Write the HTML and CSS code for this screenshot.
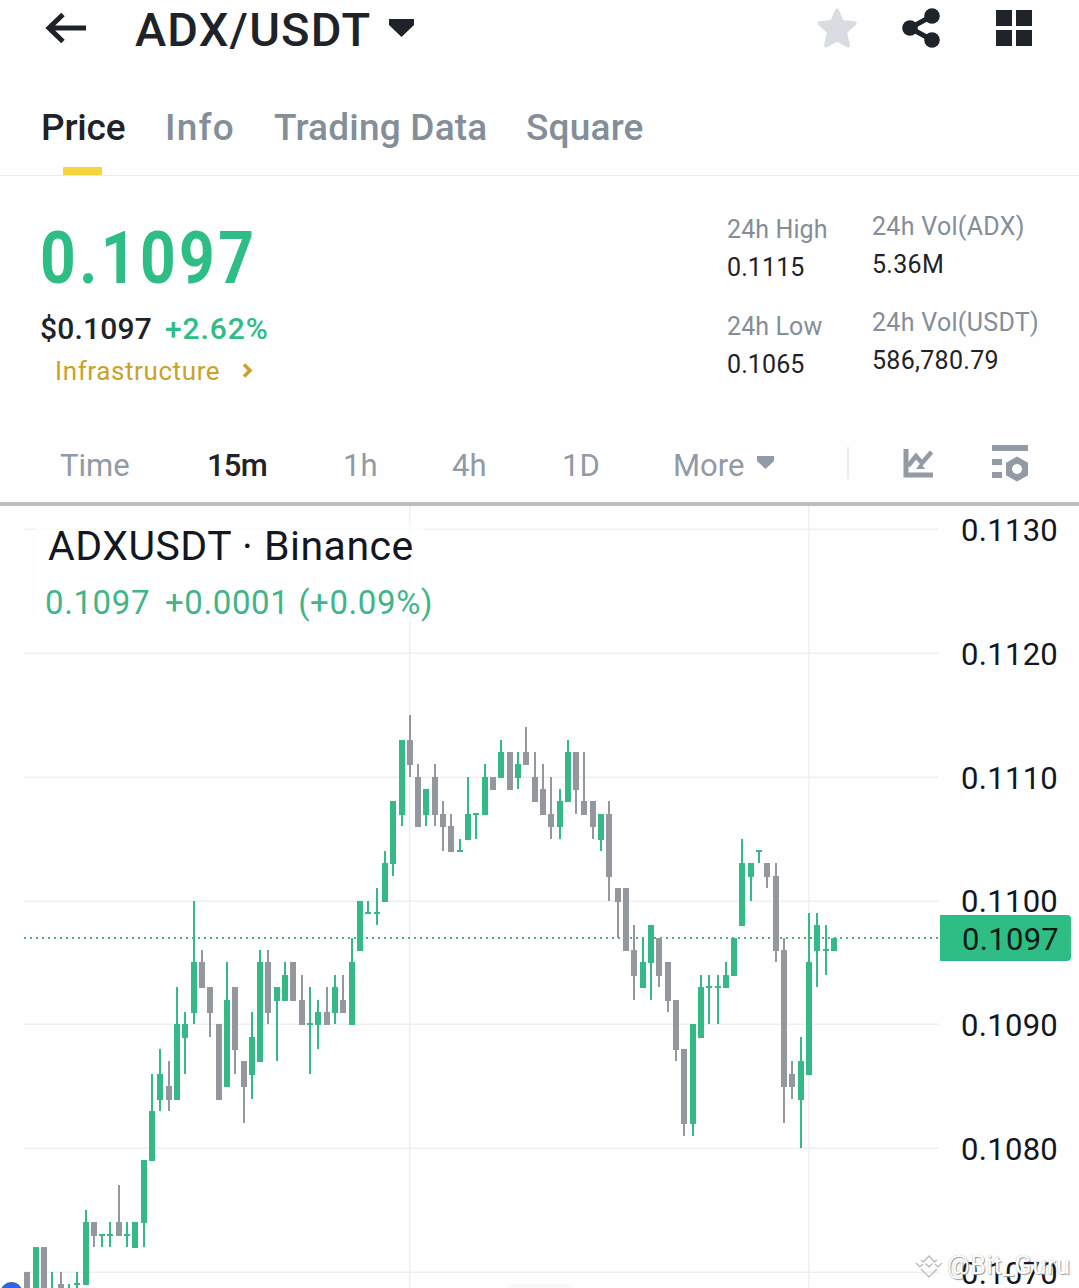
FILE: index.html
```html
<!DOCTYPE html>
<html lang="en">
<head>
    <meta charset="UTF-8">
    <meta name="viewport" content="width=device-width, initial-scale=1.0">
    <title>ADX/USDT</title>
    <link rel="stylesheet" href="styles.css">
</head>
<body>
    <div class="page">
        <header class="header">
            <svg class="back" width="42" height="32" viewBox="0 0 42 32"><path d="M41 16H5M18 2.500L4 16l14 13.500" fill="none" stroke="#1e2329" stroke-width="5"/></svg>
            <h1>ADX/USDT</h1>
            <svg class="caret" width="25" height="18" viewBox="0 0 25 18"><path d="M0 0h25v6L12.500 18 0 6z" fill="#1e2329"/></svg>
            <div class="header-actions">
                <svg width="40" height="40" viewBox="0 0 40 40"><path d="M20 2.500l5 11.500 12.500 1.300-9.500 8.700 3 13.500L20 31.500 9 37.500l3-13.500-9.500-8.700L15 14z" fill="#d9dce1" stroke="#d9dce1" stroke-width="4" stroke-linejoin="round"/></svg>
                <svg width="38" height="40" viewBox="0 0 38 40"><path d="M30 8L8 20l22 12" fill="none" stroke="#1e2329" stroke-width="5"/><g fill="#1e2329"><circle cx="30" cy="8" r="7.800"/><circle cx="8" cy="20" r="7.800"/><circle cx="30" cy="32" r="7.800"/></g></svg>
                <svg width="36" height="36" viewBox="0 0 36 36"><path d="M0 0h16v16H0zM20 0h16v16H20zM0 20h16v16H0zM20 20h16v16H20z" fill="#1e2329"/></svg>
            </div>
        </header>

        <nav class="tabs">
            <a class="tab active">Price</a>
            <a class="tab info">Info</a>
            <a class="tab trading">Trading Data</a>
            <a class="tab square">Square</a>
        </nav>

        <section class="summary">
            <div class="price-block">
                <div class="last-price">0.1097</div>
                <div class="fiat"><span>$0.1097</span><span class="change">+2.62%</span></div>
                <div class="category">
                    <span>Infrastructure</span>
                    <svg width="11" height="15" viewBox="0 0 11 15"><path d="M2 1.500l6 6-6 6" fill="none" stroke="#c9a227" stroke-width="3.500"/></svg>
                </div>
            </div>
            <dl class="stats">
                <dt>24h High</dt><dd>0.1115</dd>
                <dt>24h Low</dt><dd>0.1065</dd>
            </dl>
            <dl class="stats volume">
                <dt>24h Vol(ADX)</dt><dd>5.36M</dd>
                <dt class="usdt">24h Vol(USDT)</dt><dd>586,780.79</dd>
            </dl>
        </section>

        <div class="periods">
            <span>Time</span>
            <span class="active">15m</span>
            <span>1h</span>
            <span>4h</span>
            <span>1D</span>
            <span class="more">More <svg width="17" height="13" viewBox="0 0 17 13"><path d="M0 0h17v5l-8.500 8L0 5z" fill="#929aa5"/></svg></span>
            <i class="divider"></i>
            <svg class="tool" width="30" height="29" viewBox="0 0 30 29"><g fill="none" stroke="#929aa5"><path d="M3 0v26H30" stroke-width="5"/><path d="M5 17l8-10 6 7L28.500 3" stroke-width="4.500"/></g><path d="M17.500 14l4.500 6h-9z" fill="#929aa5"/></svg>
            <svg class="tool" width="37" height="38" viewBox="0 0 37 38"><path fill="#929aa5" fill-rule="evenodd" d="M0 1h36v6H0zM0 15h10v6H0zM0 28h10v6H0zM25 12.500l11 6.300v12.400l-11 6.300-11-6.300V18.800zM25 20a5 5 0 1 0 .01 0z"/></svg>
        </div>

        <main class="chart">
            <svg id="plot" class="plot" width="940" height="782" viewBox="0 506 940 782"></svg>
            <div class="axis" id="axis"></div>
            <div class="legend">
                <div class="legend-name">ADXUSDT · Binance</div>
                <div class="legend-values"><span>0.1097</span><span>+0.0001 (+0.09%)</span></div>
            </div>
            <div class="price-tag">0.1097</div>
            <div class="badge"></div>
            <div class="handle"></div>
            <div class="watermark">
                <svg width="28" height="24" viewBox="0 0 28 24"><path d="M6 6l2.500 2L14 2l5.500 6L22 6M1 9l4 4 3-3M20 10l3 3 4-4M10.500 9.500L14 13l3.500-3.500M6 15l8 8 8-8" fill="none" stroke="#b4b6b9" stroke-width="1.200"/></svg>
                <span>@Bit_Guru</span>
            </div>
        </main>
    </div>

    <script>
        // [color, high, bodyTop, bodyBottom, low], prices in units of 0.0001
        const candles = [
            ['d',1070,1070,1066,1066], ['u',1072,1072,1066,1066], ['d',1072,1072,1066,1066], ['u',1070,1067,1066,1066],
            ['d',1070,1069,1066,1066], ['u',1069,1067,1066,1066], ['u',1070,1069,1069,1066], ['u',1075,1074,1069,1069],
            ['d',1074,1074,1073,1072], ['u',1073,1073,1073,1072], ['u',1074,1073,1073,1072], ['d',1077,1074,1073,1073],
            ['u',1074,1073,1073,1072], ['u',1074,1074,1072,1072], ['u',1079,1079,1074,1072], ['u',1086,1083,1079,1079],
            ['u',1088,1086,1084,1083], ['d',1087,1085,1084,1083], ['u',1093,1090,1084,1084], ['u',1091,1090,1089,1086],
            ['u',1100,1095,1091,1090], ['d',1096,1095,1093,1093], ['d',1093,1093,1091,1089], ['d',1090,1090,1084,1084],
            ['u',1095,1092,1085,1085], ['d',1093,1093,1088,1086], ['d',1087,1087,1085,1082], ['u',1091,1089,1086,1084],
            ['u',1096,1095,1087,1087], ['d',1096,1095,1091,1090], ['u',1093,1093,1092,1087], ['u',1095,1094,1092,1092],
            ['d',1095,1095,1092,1092], ['d',1094,1092,1090,1090], ['u',1093,1090,1090,1086], ['u',1092,1091,1090,1088],
            ['d',1093,1091,1090,1090], ['u',1094,1093,1091,1090], ['d',1094,1092,1091,1091], ['u',1097,1095,1090,1090],
            ['u',1100,1100,1096,1096], ['u',1100,1099,1099,1099], ['u',1101,1099,1099,1098], ['u',1104,1103,1100,1100],
            ['u',1108,1108,1103,1102], ['u',1113,1113,1107,1106], ['d',1115,1113,1111,1110], ['d',1111,1110,1106,1106],
            ['u',1109,1109,1107,1106], ['d',1111,1110,1107,1106], ['d',1108,1107,1106,1104], ['d',1107,1106,1104,1104],
            ['u',1105,1104,1104,1104], ['u',1110,1107,1105,1105], ['u',1107,1107,1107,1105], ['u',1111,1110,1107,1107],
            ['d',1110,1110,1109,1109], ['u',1113,1112,1110,1110], ['d',1112,1112,1109,1109], ['u',1112,1111,1110,1109],
            ['d',1114,1112,1111,1111], ['d',1112,1110,1108,1108], ['d',1111,1109,1107,1107], ['d',1110,1107,1106,1105],
            ['u',1109,1108,1106,1105], ['u',1113,1112,1108,1108], ['d',1112,1112,1109,1107], ['d',1112,1108,1107,1107],
            ['d',1108,1108,1106,1105], ['u',1107,1107,1105,1104], ['d',1108,1107,1102,1100], ['d',1101,1101,1100,1097],
            ['d',1101,1101,1096,1096], ['d',1098,1096,1094,1092], ['u',1097,1095,1093,1093], ['u',1098,1098,1095,1092],
            ['d',1097,1097,1094,1093], ['d',1095,1095,1092,1091], ['d',1092,1092,1088,1087], ['d',1088,1088,1082,1081],
            ['u',1090,1090,1082,1081], ['u',1094,1093,1089,1089], ['u',1094,1093,1093,1090], ['u',1094,1093,1093,1090],
            ['u',1095,1094,1093,1093], ['u',1097,1097,1094,1094], ['u',1105,1103,1098,1098], ['u',1103,1103,1102,1100],
            ['u',1104,1104,1104,1103], ['d',1103,1103,1102,1101], ['d',1103,1102,1096,1095], ['d',1097,1096,1085,1082],
            ['d',1087,1086,1085,1084], ['u',1089,1087,1084,1080], ['u',1099,1095,1086,1086], ['u',1099,1098,1096,1093],
            ['u',1098,1096,1096,1094], ['u',1097,1097,1096,1096]
        ];

        const yOf = price => Math.round(900.5 + (1100 - price) * 12.38);
        const rect = (cls, x, y, w, h) => `<rect class="${cls}" x="${x}" y="${y}" width="${w}" height="${h}"/>`;
        let svg = '';
        let labels = '';

        // grid and price scale
        for (let price = 1130; price >= 1070; price -= 10) {
            svg += rect('grid', 24, yOf(price) - 0.5, 915, 1.5);
            labels += `<span>${(price / 10000).toFixed(4)}</span>`;
        }
        svg += rect('grid', 409, 506, 1.5, 782) + rect('grid', 808, 506, 1.5, 782);

        // current price
        svg += '<path class="current" d="M24 938H940"/>';

        candles.forEach(([color, high, top, bottom, low], i) => {
            const x = Math.round(27.3 + i * 8.316);
            svg += rect(color, x - 1, yOf(high), 2, yOf(low) - yOf(high));
            if (top === bottom) {
                svg += rect(color, x - 3, yOf(top) - 1, 6, 2);
            } else {
                svg += rect(color, x - 3, yOf(top), 6, yOf(bottom) - yOf(top) + 1);
            }
        });

        document.getElementById('plot').innerHTML = svg;
        document.getElementById('axis').innerHTML = labels;
    </script>
</body>
</html>
```
FILE: styles.css
```css
* {
    margin: 0;
    padding: 0;
    box-sizing: border-box;
}

body {
    font-family: Roboto, "Noto Sans", sans-serif;
    background: #fefefe;
    color: #1e2329;
}

svg {
    display: block;
}

.page {
    width: 1079px;
    height: 1288px;
    overflow: hidden;
}

.header {
    display: flex;
    align-items: center;
    height: 78px;
    padding: 0 47px 22px 45px;
}

h1 {
    margin-left: 48px;
    padding-top: 3px;
    width: 254px;
    font-size: 47px;
    font-weight: 500;
    line-height: 58px;
    letter-spacing: 1.2px;
    white-space: nowrap;
}

.header-actions {
    display: flex;
    align-items: center;
    margin-left: auto;
}

.header-actions svg + svg {
    margin-left: 45px;
}

.header-actions svg:last-child {
    margin-left: 56px;
}

.tabs {
    display: grid;
    grid-template-columns: 124px 109px 252px 1fr;
    height: 98px;
    padding-left: 41px;
    border-bottom: 1px solid #eaecef;
    font-size: 37px;
    font-weight: 500;
    line-height: 100px;
    letter-spacing: 0.2px;
    color: #848e98;
    white-space: nowrap;
}

.tab.info {
    letter-spacing: 1.2px;
}

.tab.active {
    position: relative;
    letter-spacing: -0.2px;
    color: #1e2329;
}

.tab.active::after {
    content: "";
    position: absolute;
    left: 22px;
    bottom: 3px;
    width: 39px;
    height: 8px;
    background: #f8d33a;
    border-radius: 1px 1px 0 0;
}

.summary {
    display: grid;
    grid-template-columns: 687px 145px 1fr;
    height: 251px;
    padding: 41px 0 0 40px;
    white-space: nowrap;
}

.last-price {
    padding-top: 2px;
    font-size: 72px;
    font-weight: 700;
    line-height: 80px;
    letter-spacing: 4px;
    color: #2ebd85;
    transform: scaleX(0.865);
    transform-origin: left;
}

.fiat {
    display: flex;
    gap: 13px;
    margin-top: 5px;
    font-size: 30px;
    font-weight: 500;
    line-height: 50px;
    letter-spacing: 0.2px;
}

.change {
    letter-spacing: 0.9px;
    color: #2ebd85;
}

.category {
    display: flex;
    align-items: center;
    gap: 22px;
    padding-left: 15px;
    font-size: 26px;
    line-height: 34px;
    letter-spacing: 0.6px;
    color: #c9a227;
}

.category svg {
    margin-top: -2px;
}

.stats {
    margin-top: -6px;
    font-size: 25px;
    line-height: 38px;
    letter-spacing: 0.1px;
}

.volume {
    margin-top: -9px;
    letter-spacing: 0.3px;
}

.stats dt {
    color: #848e98;
}

.stats dd {
    margin-bottom: 21px;
}

.volume dd {
    margin-bottom: 20px;
}

.periods {
    display: grid;
    grid-template-columns: 147px 136px 109px 110px 111px 174px 56px 89px 1fr;
    align-items: center;
    height: 79px;
    padding: 1px 0 0 60px;
    border-bottom: 4px solid #bbbdc1;
    font-size: 31px;
    color: #929aa5;
}

.periods .active {
    color: #1e2329;
    font-weight: 500;
    letter-spacing: -0.8px;
}

.periods .tool {
    margin-top: -4px;
}

.more {
    display: flex;
    align-items: center;
    gap: 13px;
}

.more svg {
    margin-top: -6px;
}

.divider {
    width: 2px;
    height: 32px;
    margin-top: -4px;
    background: #eaecef;
}

.chart {
    position: relative;
    display: flex;
    height: 782px;
}

.plot {
    flex: none;
}

.grid {
    fill: #eeeff0;
}

.current {
    stroke: #5aa98b;
    stroke-width: 2;
    stroke-dasharray: 2 4;
}

.u {
    fill: #35b986;
}

.d {
    fill: #94979e;
}

.axis {
    display: flex;
    flex-direction: column;
    flex: none;
    width: 139px;
    margin-top: -37px;
    padding-left: 21px;
    font-size: 31px;
    letter-spacing: 0.3px;
    color: #131722;
}

.axis span {
    flex: none;
    height: 123.800px;
    line-height: 123.800px;
}

.legend {
    position: absolute;
    left: 36px;
    top: 18px;
    width: 388px;
    height: 98px;
    padding-left: 9px;
    background: rgba(255, 255, 255, 0.7);
    white-space: nowrap;
}

.legend-name {
    padding-left: 3px;
    font-size: 41px;
    line-height: 44px;
    letter-spacing: 0.5px;
    color: #131722;
}

.legend-values {
    display: flex;
    gap: 15px;
    margin-top: 13px;
    font-size: 33px;
    line-height: 44px;
    letter-spacing: 0.6px;
    color: #3fb588;
}

.price-tag {
    position: absolute;
    left: 940px;
    top: 409px;
    width: 131px;
    height: 46px;
    padding-left: 22px;
    border-radius: 0 4px 4px 0;
    background: #2ebd85;
    font-size: 31px;
    line-height: 49px;
    letter-spacing: 0.3px;
    color: #0c1a16;
}

.badge {
    position: absolute;
    left: 0;
    top: 776px;
    width: 23px;
    height: 23px;
    border: 1px solid #4d5a6b;
    border-radius: 50%;
    background: #2962ff;
}

.handle {
    position: absolute;
    left: 508px;
    top: 778px;
    width: 65px;
    height: 20px;
    border-radius: 8px;
    background: #f7f7f8;
}

.watermark {
    position: absolute;
    left: 915px;
    top: 746px;
    display: flex;
    align-items: center;
    gap: 4px;
    font-size: 25px;
    line-height: 28px;
    letter-spacing: 0.8px;
    color: #fff;
    text-shadow: 1px 1px 1px #999, 0 0 1px #aaa;
}
```
